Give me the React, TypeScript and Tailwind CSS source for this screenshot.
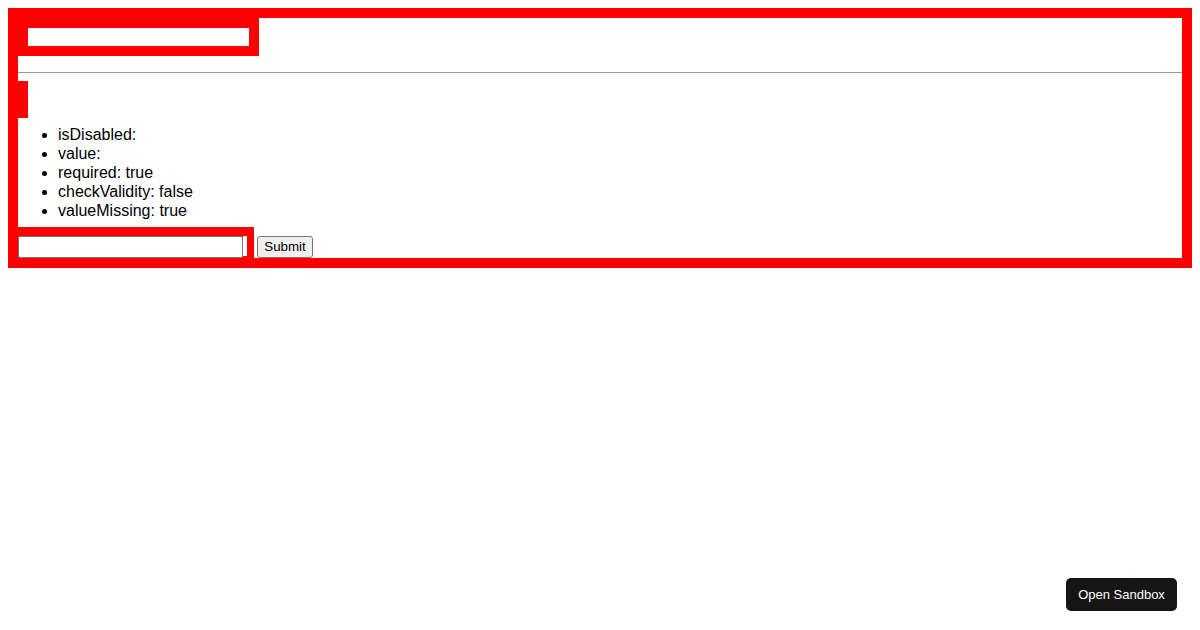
export default function App() {
  const items = [
    "isDisabled:",
    "value:",
    "required: true",
    "checkValidity: false",
    "valueMissing: true",
  ];

  return (
    <div className="w-[1200px] h-[630px] bg-white p-2 font-['Liberation_Sans',Arial,sans-serif] text-black">
      <div className="border-[10px] border-[#ff0000]">
        <div className="w-[241px] h-[38px] border-[10px] border-[#ff0000] bg-white" />
        <div className="mt-4 h-px bg-[#9a9a9a]" />
        <div className="mt-2 w-[10px] h-[37px] bg-[#ff0000]" />
        <ul className="list-disc pl-10 mt-[6.5px] mb-[7.5px] text-[16px] leading-[19px]">
          {items.map((t) => (
            <li key={t}>{t}</li>
          ))}
        </ul>
        <div className="flex items-start">
          <div className="flex items-start bg-[#ff0000] pt-[9px] pr-[7px]">
            <input
              type="text"
              className="w-[225px] h-[22px] bg-white border border-[#767676] rounded-[2px] px-1 text-[13px] outline-none"
            />
            <div className="w-[4px] h-[20px] bg-white" />
          </div>
          <button className="ml-[3px] mt-[9px] w-[56px] h-[22px] bg-[#efefef] border border-[#767676] rounded-[3px] text-[13.33px] leading-none text-black font-['Liberation_Sans',Arial,sans-serif]">
            Submit
          </button>
        </div>
      </div>
      <div className="flex justify-end mt-[310px] pr-[15px]">
        <button className="w-[111px] h-[33px] rounded-[5px] bg-[#151515] text-white text-[13px] font-['Liberation_Sans',Arial,sans-serif]">
          Open Sandbox
        </button>
      </div>
    </div>
  );
}
